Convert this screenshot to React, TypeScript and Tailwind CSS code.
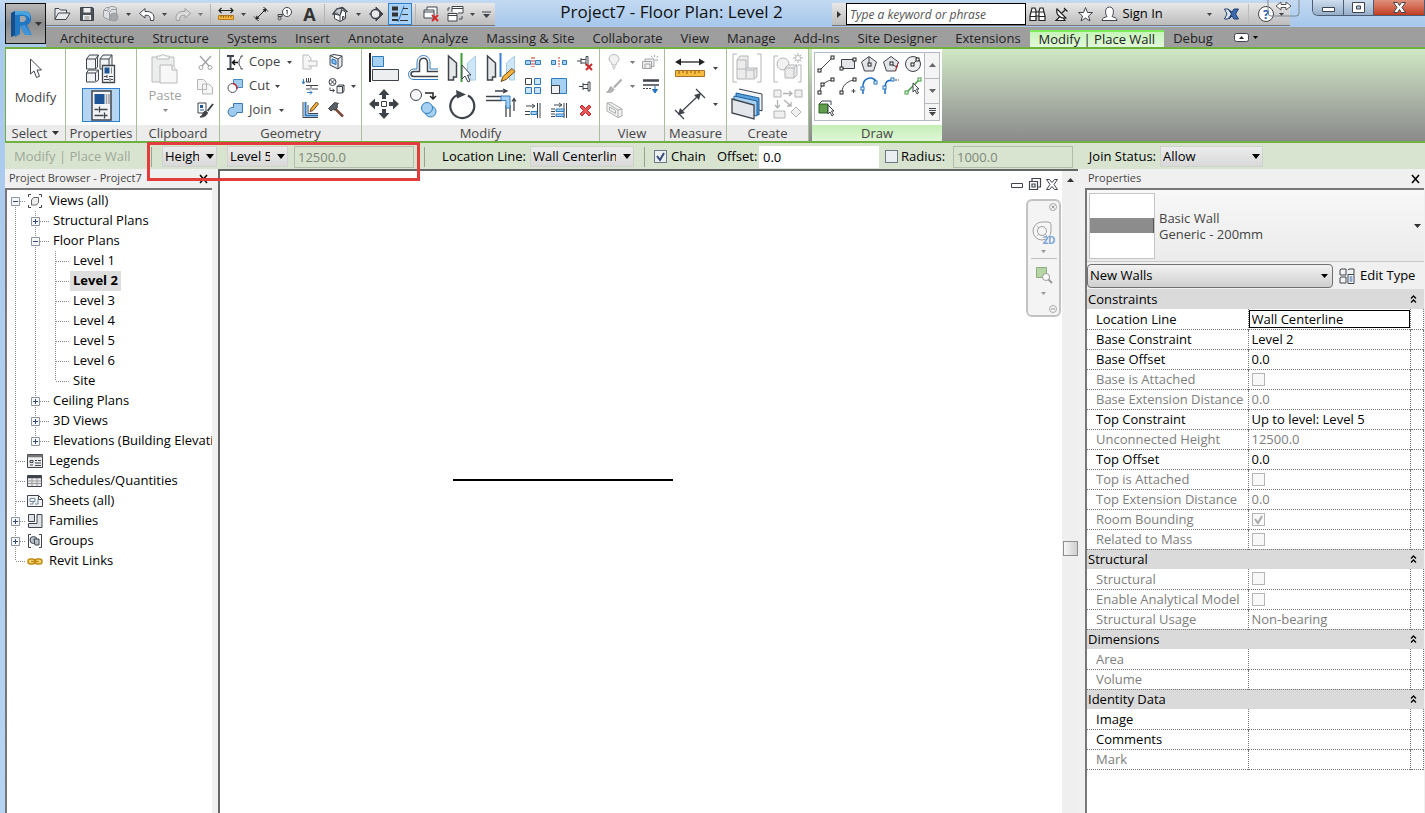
import { useState } from 'react'
import type { ReactNode } from 'react'

type IconProps = { w?: number; h?: number; box?: string; className?: string; children: ReactNode }

function Icon({ w = 16, h = w, box, className = '', children }: IconProps) {
  return (
    <svg
      width={w}
      height={h}
      viewBox={box || `0 0 ${w} ${h}`}
      fill="none"
      stroke="#3f444c"
      aria-hidden="true"
      className={`shrink-0 overflow-visible ${className}`}
    >
      {children}
    </svg>
  )
}

function Caret({ className = 'fill-[#444]' }: { className?: string }) {
  return (
    <svg width="5" height="3" viewBox="0 0 5 3" aria-hidden="true" className={`shrink-0 ${className}`}>
      <path d="M0 0h5L2.5 3z" />
    </svg>
  )
}

/* ---------- Quick access toolbar ---------- */

const OpenIcon = () => (
  <Icon w={17} h={14}>
    <path d="M1 12V1.500h4l1.500 1.500h6V6M1 12l3.500-6H16l-4 6.500H1z" fill="#e8eaec" strokeLinejoin="round" />
  </Icon>
)
const SaveIcon = () => (
  <Icon w={14}>
    <path d="M.5 .5h12l1 1v12H.5z" fill="#4a5058" />
    <path d="M3.500 1h7v4.500h-7z" fill="#eee" stroke="none" />
    <path d="M3 8h8v5H3z" fill="#eee" stroke="none" />
    <path d="M4.500 10h5M4.500 12h5" stroke="#888" />
  </Icon>
)
const SyncIcon = () => (
  <Icon w={17} h={16}>
    <g stroke="#999ca0">
      <path d="M1.500 4.500l3-3h3L8.500.500h3l3 1.500V11l-6 3.500-7-3.500z" fill="#dcdee0" strokeLinejoin="round" />
      <path d="M1.500 4.500h4l2 2v8M7.500 6.500l2-3h5M5.500 4.500l2-3" />
      <circle cx="12" cy="11" r="4" fill="#a5a7aa" />
    </g>
  </Icon>
)
const UndoIcon = () => (
  <Icon w={16} h={13}>
    <path d="M6 .5L.5 5.500 6 10V7.500c3-.8 5.500 0 5.500 5h3C16.500 6 12 3 6 3.500z" fill="#fff" strokeLinejoin="round" />
  </Icon>
)
const RedoIcon = () => (
  <Icon w={16} h={13}>
    <path d="M10 .5l5.500 5L10 10V7.500c-3-.8-5.500 0-5.500 5h-3C-.5 6 4 3 10 3.500z" fill="#ddd" stroke="#9a9da0" strokeLinejoin="round" />
  </Icon>
)
const RulerSmallIcon = () => (
  <Icon w={16} h={14}>
    <path d="M1 3.500h14M3.500 1L1 3.500 3.500 6M12.500 1L15 3.500 12.500 6" strokeWidth="1.200" stroke="#222" />
    <path d="M.5 8.500h15v4H.5z" fill="#f6b93b" stroke="#b9791c" />
    <path d="M3 8.500v2M5.500 8.500v2M8 8.500v2M10.500 8.500v2M13 8.500v2" stroke="#8a5a14" />
  </Icon>
)
const AlignedDimIcon = () => (
  <Icon w={16} h={16}>
    <path d="M3 13L13 3M1 10.500L5.500 15M10.500 1L15 5.500" stroke="#222" />
    <path d="M2.500 13.500l1-4 3 3zM13.500 2.500l-1 4-3-3z" fill="#222" stroke="none" />
  </Icon>
)
const TagIcon = () => (
  <Icon w={16} h={14}>
    <circle cx="10" cy="5" r="4.500" fill="#fff" />
    <path d="M9 4l1.200-1v4.500M1 7.500h4v2H1zM2.500 10a1.500 1.500 0 1 0 .1 0M5 8l1.500-1" />
  </Icon>
)
const HouseIcon = () => (
  <Icon w={16} h={15}>
    <path d="M2.500 7v4.500L8 14.500l5.500-3V5L10 3 8 8.500z" fill="#fff" strokeLinejoin="round" />
    <path d="M.5 7.500L5 2l5.500-1.500L15.500 5" strokeWidth="1.500" />
    <path d="M1 7.500L5 2l5-1-2 7.500L4.500 6z" fill="#c9ccd0" strokeLinejoin="round" />
    <path d="M8 8.500v6M10.500 13V9.500h1.500V12M10 1l5 4" />
  </Icon>
)
const SectionIcon = () => (
  <Icon w={15} h={14}>
    <path d="M7 0l7 7-7 7z" fill="#3f444c" />
    <circle cx="6.500" cy="7" r="4.500" fill="#e9eaeb" strokeWidth="1.500" />
    <path d="M0 7h2" />
  </Icon>
)
const ThinLinesIcon = () => (
  <Icon w={18} h={16}>
    <path d="M1 2.500h6M1 8.500h6" strokeWidth="4" stroke="#333" />
    <path d="M1 14h6" strokeWidth="2" stroke="#333" />
    <path d="M13 0L7 16" stroke="#1d6fc4" />
    <path d="M12 2.500h5M11 8.500h6M9 14.500h8" stroke="#333" />
  </Icon>
)
const CloseHiddenIcon = () => (
  <Icon w={17} h={16}>
    <path d="M4 4V1h10v7M1 4h10v8H1zM1 6h10" fill="#fff" />
    <path d="M9 9l6 6M15 9l-6 6" stroke="#d22a2a" strokeWidth="2" />
  </Icon>
)
const SwitchIcon = () => (
  <Icon w={17} h={16}>
    <path d="M5 6V.5h11V7h-5M1 7.500h9V15H1zM1 9.500h9M5 2.500h11" fill="#fff" />
    <path d="M1 5V2h2M15 10v3h-3" />
  </Icon>
)

/* ---------- Info center ---------- */

const BinocularsIcon = () => (
  <Icon w={17} h={15}>
    <path d="M3 1h3l1 3v9.500H1V9zM14 1h-3l-1 3v9.500h6V9zM7 5h3v4H7zM1.500 9.500h5M10.500 9.500h5M2.500 5h4M10.500 5h4" fill="#fff" strokeWidth="1.200" stroke="#222" />
  </Icon>
)
const DishIcon = () => (
  <Icon w={15}>
    <path d="M3 2c-1.500 5 3 10 9 9zM7.500 6.500l4-4M10 1l3.500 3.500M6 9.500l-4 4h9L9 11" fill="#fff" strokeWidth="1.200" stroke="#222" />
  </Icon>
)
const StarIcon = () => (
  <Icon w={15}>
    <path d="M7.500 .5l2 5h5L10.500 9l1.500 5-4.500-3L3 14l1.500-5L.5 5.500h5z" fill="#fff" />
  </Icon>
)
const PersonIcon = () => (
  <Icon w={17} h={16}>
    <path d="M1 14.500c0-3 3-3 5-4C4 8 3.500 1 8.500 1s4.500 7 2.500 9.500c2 1 5 1 5 4z" fill="#fff" />
  </Icon>
)
const ExchangeIcon = () => (
  <Icon w={15} h={12}>
    <path d="M4 1l4 3 2-3h4.500l-3 5 3 5H10L8 8l-3 3L8 6z" fill="#3c6cb0" stroke="#203f70" />
    <path d="M.5 1H4l3.500 5L4 11H.5L3 6z" fill="#dfe8f2" stroke="#203f70" />
  </Icon>
)

/* ---------- Ribbon icons ---------- */

const CursorIcon = () => (
  <Icon w={14} h={21}>
    <path d="M1.500 1v15l3.500-3 2.500 6.500 3-1.300L8 12h4.500z" fill="#fff" strokeLinejoin="round" />
  </Icon>
)
const TypePropsIcon = () => (
  <Icon w={30} h={30} box="1 0 30 30">
    <g fill="#f2f3f4" strokeLinejoin="round">
      <path d="M1.500 5l3-4h9l-1 3v9l-2 2h-9zM1.500 5h9v10M10.500 5l3-4M15 5l3-4h9v11l-3 3h-9zM15 5h9v10M24 5l3-4M1.500 19l2-3h10v10l-3 2h-9zM1.500 19h9v8M10.500 19l3-3" />
    </g>
    <path d="M17.500 11.500h12v17h-12z" fill="#f4f5f6" strokeWidth="1.300" />
    <path d="M19.500 13.500h5v6h-5z" fill="#1d5597" stroke="none" />
    <path d="M26.500 13.500v6" stroke="#888" />
    <path d="M19 22.500h3M24 22.500h4M19 25.500h5M26 25.500h2M22 21v3M25 24v3" />
  </Icon>
)
const PropsIcon = () => (
  <Icon w={21} h={29} box="1 1 20 29">
    <path d="M1.500 1h19v29h-19z" fill="#f2f3f4" strokeWidth="1.500" />
    <path d="M4 4h10v10H4z" fill="#1d5597" stroke="none" />
    <path d="M16 4v10M18.500 4v10" stroke="#9a9da1" strokeWidth="1.500" />
    <path d="M4 19.500h4M9 16.500v6M9 19.500h8M4 25.500h9M14 22.500v6M14 25.500h3" strokeWidth="1.300" />
  </Icon>
)
const PasteIcon = () => (
  <Icon w={28} h={32}>
    <g stroke="#b9babc" fill="#eceded">
      <path d="M1 4h22v25H1z" />
      <path d="M6 6V3h3q3-3 6 0h3v3z" fill="#fafafa" />
      <path d="M9 12h12l5 5v13H9z" fill="#f7f7f7" />
      <path d="M21 12v5h5" />
    </g>
  </Icon>
)
const ScissorsIcon = () => (
  <Icon w={15} h={15}>
    <path d="M2 1l9 10M13 1L4 11" stroke="#9fa1a4" strokeWidth="1.300" />
    <circle cx="3" cy="12.500" r="2" stroke="#9fa1a4" />
    <circle cx="12" cy="12.500" r="2" stroke="#9fa1a4" />
  </Icon>
)
const CopyClipIcon = () => (
  <Icon w={16} h={15}>
    <path d="M.5 .5h6l3 3v7h-9zM5.500 5h6l4 3v7h-10z" fill="#f5f5f5" stroke="#b4b6b8" />
  </Icon>
)
const MatchIcon = () => (
  <Icon w={17} h={16}>
    <path d="M1 1h8v10H1z" fill="#fff" />
    <path d="M3 3h3v3H3z" fill="#1d5597" stroke="none" />
    <path d="M3 8h4" stroke="#1d5597" />
    <path d="M16 2l-5.500 7" strokeWidth="2" />
    <path d="M3 15c3 .5 7-1 7.500-4.500L8 9c-2 1-2 5-5 6z" fill="#444" />
  </Icon>
)
const CopeIcon = () => (
  <Icon w={17} h={15}>
    <path d="M0 1h7M3.500 1v13M0 14h7" strokeWidth="2" />
    <path d="M5 7.500h6M8 5L5.500 7.500 8 10" stroke="#111" strokeWidth="1.500" />
    <path d="M16 1h-2c0 3-2 3-2 5v3c0 2 2 2 2 5h2" />
  </Icon>
)
const CutIcon = () => (
  <Icon w={17} h={16}>
    <path d="M6.500 1.500h9v8h-9z" fill="#9fcbee" stroke="#4589bf" />
    <circle cx="5.500" cy="10" r="4.500" fill="#fff" stroke="#555" />
    <path d="M5.500 5.500a4.500 4.500 0 0 1 4.300 5.500" stroke="#c22f3e" strokeWidth="1.500" />
  </Icon>
)
const JoinIcon = () => (
  <Icon w={17} h={16}>
    <path d="M6.500 5.500v-4h9v9h-5.500a4.500 4.500 0 1 1-3.500-5z" fill="#9fcbee" stroke="#3b77a8" />
  </Icon>
)
const CopingOffIcon = () => (
  <Icon w={16}>
    <path d="M1 1h5l3 3v3h6v5H9v3H1zM9 7H6M9 12H6" fill="#f5f5f5" stroke="#b9bbbd" />
  </Icon>
)
const WallOpenIcon = () => (
  <Icon w={14} h={16}>
    <path d="M1 1.500l8 3.500V15L1 11zM9 5l4-3v10l-4 3M1 1.500L5 .5l8 1.500" fill="#e6e9ec" strokeLinejoin="round" />
    <path d="M3 5l4 1.500v4L3 9z" fill="#8cc2ee" stroke="#1d6fc4" />
  </Icon>
)
const BeamJoinIcon = () => (
  <Icon w={17} h={16}>
    <path d="M1.500 1v5M0 3.500L1.500 6 3 3.500M5 14.500h5M8 12.500l2 2-2 2" stroke="#2e7bc0" />
    <path d="M4.500 0v4h4V0M6.500 0v4M4 7.500h12M4 11h4M10 11h6M9 7.500v4" />
  </Icon>
)
const SplitFaceIcon = () => (
  <Icon w={17} h={16}>
    <circle cx="4.500" cy="4" r="3.500" />
    <path d="M2.500 2l4 4M6.500 2l-4 4M2 9.500v3h4M4.500 11l2 1.500-2 1.500" />
    <path d="M9 8.500L10.500 7H16v6l-1.500 2H9zM9 8.500h5.500V15M14.500 8.500L16 7" fill="#eee" />
  </Icon>
)
const PaintEdgeIcon = () => (
  <Icon w={17} h={16}>
    <path d="M1 0v15.500h15M6 3v8.500h10" />
    <path d="M3.500 0v13.500H16" stroke="#2e7bc0" strokeWidth="2" />
    <path d="M8 9.500l1-3L14.500 0l2 2L11 8.500z" fill="#f4b23c" stroke="#6b4a1a" />
  </Icon>
)
const HammerIcon = () => (
  <Icon w={17} h={16}>
    <path d="M6.500 6l8.500 8.500" stroke="#7b4a3a" strokeWidth="2.500" />
    <path d="M.5 6.500l6-6 4 1-1.500 1.500.5 2.500-2.500 2.500-2-.5L3 9z" fill="#5b6067" strokeLinejoin="round" />
  </Icon>
)

const AlignIcon = () => (
  <Icon w={30} h={30}>
    <path d="M1 0v29" strokeWidth="2" stroke="#222" />
    <path d="M3.500 3.500h11v10h-11z" fill="#a6d1f2" stroke="#2e7bc0" />
    <path d="M3.500 16.500h26v11h-26z" fill="#eceeef" />
  </Icon>
)
const OffsetIcon = () => (
  <Icon w={30} h={26}>
    <path d="M30 24.500H6C-1.500 24.500-1 14 6 14h3V8C9-2 22-2 22 8v6h8" stroke="#2e7bc0" />
    <path d="M30 21.500H6c-4 0-4-5 0-5h5.500V8c0-6.500 8-6.500 8 0v8.500H30" strokeWidth="1.500" />
  </Icon>
)
const MirrorPickIcon = () => (
  <Icon w={28} h={30} box="1 0 28 30">
    <path d="M1.500 3l8 7v14h-3v3h-5z" fill="#e5e7e9" strokeWidth="1.500" />
    <path d="M28.500 3l-8 7v14h3v3h5z" fill="#cfe6f7" stroke="#a6cbe6" />
    <path d="M14.500 0v29" stroke="#3f9c3a" strokeWidth="2" />
    <path d="M15 12v14l3-3 3 6 2-1-2.500-6H24z" fill="#fff" />
  </Icon>
)
const MirrorDrawIcon = () => (
  <Icon w={28} h={30} box="1 0 28 30">
    <path d="M1.500 3l8 7v14h-3v3h-5z" fill="#e5e7e9" strokeWidth="1.500" />
    <path d="M28.500 3l-8 7v14h3v3h5z" fill="#cfe6f7" stroke="#a6cbe6" />
    <path d="M14.500 0v24" stroke="#3a7fd0" strokeWidth="2" />
    <path d="M15 28.500l2-5 9-8 3 3-9 8z" fill="#f4b23c" stroke="#6b4a1a" />
  </Icon>
)
const MoveIcon = () => (
  <Icon w={30} h={30}>
    <path
      d="M15 0l5.500 6H17v4h-4V6H9.500zM15 30l5.500-6H17v-4h-4v4H9.500zM0 15l6-5.500V13h4v4H6v3.500zM30 15l-6-5.500V13h-4v4h4v3.500z"
      fill="#3f444c"
      stroke="none"
    />
    <path d="M12.500 12.500h5v5h-5z" />
  </Icon>
)
const CopyIcon = () => (
  <Icon w={28} h={30} box="0 1 28 30">
    <circle cx="7" cy="7" r="5.500" fill="#f6f6f6" />
    <path d="M16 5h8v6M21 8l3 3 3-3" strokeWidth="1.500" stroke="#222" />
    <circle cx="21.500" cy="23.500" r="5.500" fill="#a6d1f2" stroke="#2e7bc0" />
    <circle cx="18" cy="20" r="5.500" fill="#a6d1f2" stroke="#2e7bc0" />
  </Icon>
)
const RotateIcon = () => (
  <Icon w={28} h={30}>
    <path d="M20 6.500a12 12 0 1 1-9-1" strokeWidth="2.200" />
    <path d="M8 1l10 4.500L9 9.500z" fill="#3f444c" stroke="none" />
  </Icon>
)
const TrimIcon = () => (
  <Icon w={30} h={30}>
    <path d="M0 7.500h16M0 11.500h16M20 28V16M24 28V16M9 2h11M17 0l4 2-4 2M28 22V10M26 12.500l2-3 2 3" strokeWidth="1.300" />
    <path d="M15 7h9v12h-4v-7.500h-5z" fill="#a6d1f2" stroke="#2e7bc0" />
  </Icon>
)
const SplitIcon = () => (
  <Icon w={16} h={10}>
    <path d="M.5 3.500h5v4h-5zM10.500 3.500h5v4h-5z" fill="#a6d1f2" stroke="#2e7bc0" />
    <path d="M7 0v10M9 0v10" stroke="#c5342f" strokeDasharray="2 1" />
  </Icon>
)
const SplitGapIcon = () => (
  <Icon w={16} h={10}>
    <path d="M.5 3.500h4v4h-4zM11.500 3.500h4v4h-4z" fill="#a6d1f2" stroke="#2e7bc0" />
    <path d="M8 0v10" stroke="#c5342f" strokeDasharray="2 1" />
  </Icon>
)
const UnpinIcon = () => (
  <Icon w={16} h={15}>
    <path d="M0 6h4M4 3v6M4 4.500h5M4 8h5M9 1.500v9h2v-9z" />
    <path d="M9 9l6 6M15 9l-6 6" stroke="#cc2b2b" strokeWidth="2" />
  </Icon>
)
const PinIcon = () => (
  <Icon w={14} h={11}>
    <path d="M1 5.500h4M5 2v7M5 3.500h5M5 7.500h5M10 1v9h2V1z" />
  </Icon>
)
const ArrayIcon = () => (
  <Icon w={16}>
    <path d="M.5 .5h6v6h-6z" />
    <path d="M9.500 .5h6v6h-6zM.5 9.500h6v6h-6zM9.500 9.500h6v6h-6z" fill="#cde5f8" stroke="#2e7bc0" />
  </Icon>
)
const ScaleIcon = () => (
  <Icon w={16}>
    <path d="M.5 .5h15v15H.5z" fill="#a6d1f2" stroke="#2e7bc0" />
    <path d="M.5 7.500h8v8h-8z" fill="#f0f1f2" />
  </Icon>
)
const TrimOneIcon = () => (
  <Icon w={16}>
    <path d="M1 4h8M7 2l3 2-3 2M0 9.500h5M0 12.500h5M12.500 1v15M15 1v15" />
    <path d="M6 9.500h6v3H6z" fill="#a6d1f2" stroke="#2e7bc0" />
  </Icon>
)
const TrimManyIcon = () => (
  <Icon w={16}>
    <path d="M3 3h7M8 1l3 2-3 2M0 7h4M0 9.500h4M0 12h4M0 14.500h4M13 1v15M15.500 1v15" />
    <path d="M5 7h8v2.500H5zM5 12h8v2.500H5z" fill="#a6d1f2" stroke="#2e7bc0" />
  </Icon>
)
const DeleteIcon = () => (
  <Icon w={13}>
    <path d="M1 3l2-2 3.500 3.500L10 1l2 2-3.500 3.500L12 10l-2 2-3.500-3.500L3 12l-2-2 3.500-3.500z" fill="#f0555a" stroke="#b3262a" />
  </Icon>
)

const BulbIcon = () => (
  <Icon w={12} h={16}>
    <path d="M4 11C4 8 1 8 1 5a5 4.500 0 0 1 10 0c0 3-3 3-3 6zM4 13h4M5 15h2" fill="#f2f2f2" stroke="#b5b7b9" />
  </Icon>
)
const DisplaceIcon = () => (
  <Icon w={16} h={15}>
    <g stroke="#a2a4a6">
      <path d="M.5 6.500h9v7h-9zM3 6.500V4h9v7.500H9.500M3 9h5v4.500H3z" fill="#f0f0f0" />
      <path d="M12.500 0v2M9 1l1.500 1.500M16 1l-1.500 1.500M13 5h3" />
    </g>
  </Icon>
)
const BrushIcon = () => (
  <Icon w={16} h={15}>
    <path d="M15.500 .5L8 8.500" stroke="#a9abad" strokeWidth="2" />
    <path d="M.5 13c3 0 2-4 4.500-5.500l3 3C7 13 4 14 .5 13z" fill="#b5b5b5" stroke="#a9abad" />
  </Icon>
)
const LineworkIcon = () => (
  <Icon w={17} h={15}>
    <path d="M1 1.500h16" strokeWidth="2.500" />
    <path d="M1 6h16" strokeWidth="1.500" />
    <path d="M1 9.500h9" strokeDasharray="2 1" />
    <path d="M13 7v5M10.500 10.500L13 14l2.500-3.500z" fill="#2e7bc0" stroke="#1d6fc4" />
  </Icon>
)
const ViewBeamIcon = () => (
  <Icon w={17} h={16}>
    <path d="M1 1l4-.5 11 6.500v7l-4 1.500L1 9zM1 1l11 7v7.500M12 8l4-1M3.500 5l6 3.500v3l-6-3.500z" fill="#f2f2f2" stroke="#abadaf" />
  </Icon>
)
const MeasureIcon = () => (
  <Icon w={30} h={20}>
    <path d="M2 4h26" strokeWidth="1.300" stroke="#222" />
    <path d="M0 4l6-3.500v7zM30 4l-6-3.500v7z" fill="#222" stroke="none" />
    <path d="M.5 12.500h29v6H.5z" fill="#f6bd3f" stroke="#a8702a" />
    <path d="M4 13v3M8 13v2M12 13v3M16 13v2M20 13v3M24 13v2" stroke="#8a5a14" />
  </Icon>
)
const DimensionIcon = () => (
  <Icon w={30} h={30}>
    <path d="M4 25L25 5M0 21l9 9M21 0l9 9" strokeWidth="1.300" />
    <path d="M3 26l2-7 5 5zM26 4l-2 7-5-5z" fill="#3f444c" stroke="none" />
  </Icon>
)
const AssemblyIcon = () => (
  <Icon w={30} h={30}>
    <g stroke="#b3b5b7">
      <path d="M5 1H1v28h4M25 1h4v28h-4" />
      <path d="M5 7l3-4h8v12h9v8l-2 3H5zM5 7h9v18M5 16h9l2-2M14 17h8v8M22 17l3-2" fill="#ececec" />
    </g>
  </Icon>
)
const SimilarIcon = () => (
  <Icon w={30} h={30}>
    <g stroke="#b3b5b7">
      <path d="M5 3H1v26h4M25 12h3v17h-3" />
      <circle cx="10" cy="11" r="6" fill="#f2f2f2" />
      <path d="M12 15l3-3h9v10l-3 3h-9zM12 15h9v10M21 15l3-3" fill="#ececec" />
      <circle cx="25" cy="5" r="2.500" />
      <path d="M25 0v2M25 8v2M20 5h2M28 5h2M21.500 1.500l1.500 1.500M27 7l1.500 1.500M28.500 1.500L27 3M23 7l-1.500 1.500" />
    </g>
  </Icon>
)
const GroupIcon = () => (
  <Icon w={32} h={32}>
    <path d="M8 1l23 5v17l-3-1" fill="#f2f3f5" />
    <path d="M5 5l23 5v17L5 20z" fill="#57a2dc" stroke="#1c5f9e" />
    <path d="M3 8l23 5v15L3 23z" fill="#a9d2f2" stroke="#1c5f9e" />
    <path d="M1 11l22 6v14L1 25z" fill="#e3e6ea" strokeWidth="1.300" />
  </Icon>
)
const PartsIcon = () => (
  <Icon w={30} h={30}>
    <g stroke="#b1b3b5">
      <path d="M1 1h7v7H1zM22 1h7v7h-7zM1 22h11v7H1zM23 18l5 5-5 5-5-5z" fill="#f0f0f0" />
      <path d="M10 4.500h9M16 2l3 2.500L16 7M4.500 11v8M2 16l2.500 3L7 16M11 11l7 6M14 17h4v-4" strokeWidth="1.300" />
    </g>
  </Icon>
)

/* ---------- Draw gallery ---------- */

const Node = ({ x, y, c = '#222' }: { x: number; y: number; c?: string }) => (
  <rect x={x - 1} y={y - 1} width="3" height="3" fill="#fff" stroke={c} />
)

const drawTools: { name: string; icon: ReactNode }[] = [
  { name: 'Line', icon: <><path d="M1 15L15 1" /><Node x={1} y={14} /><Node x={14} y={1} /></> },
  { name: 'Rectangle', icon: <><path d="M1.500 3.500h13v9h-13z" fill="#e3e5e8" /><Node x={1} y={12} /><Node x={14} y={3} /></> },
  { name: 'Inscribed polygon', icon: <><path d="M8 .5l7.500 5.500-3 9h-9L.5 6z" fill="#e3e5e8" /><path d="M8 1v7" /><Node x={8} y={8} /></> },
  { name: 'Circumscribed polygon', icon: <><path d="M8 .5l7.500 5.500-3 9h-9L.5 6z" fill="#e3e5e8" /><path d="M8 8l5 2.500" /><path d="M13 10l2 1M13.500 10.500L12.500 15M13.500 10.500l2-4" stroke="#c22" strokeDasharray="2 1" /><Node x={8} y={7} /></> },
  { name: 'Circle', icon: <><circle cx="8" cy="8" r="7.500" fill="#eceef0" /><path d="M8 8l5-5" /><Node x={7} y={8} /><Node x={12} y={3} /></> },
  { name: 'Start-end-radius arc', icon: <><path d="M2 14C2 8 7 3 14 2" /><Node x={1} y={14} /><Node x={4} y={6} /><Node x={14} y={1} /></> },
  { name: 'Center-ends arc', icon: <><path d="M2 14C2 8 7 3 14 2M13.500 11v4M11.500 13h4" /><Node x={1} y={14} /><Node x={14} y={1} /></> },
  { name: 'Tangent end arc', icon: <><path d="M2 16v-6C1-2 14-2 15 4" stroke="#1d6fc4" strokeWidth="1.500" /><Node x={1} y={10} c="#1d6fc4" /><Node x={14} y={4} c="#1d6fc4" /></> },
  { name: 'Fillet arc', icon: <><path d="M2 16v-6C2 4 4 2 10 2" stroke="#1d6fc4" strokeWidth="1.500" /><path d="M12 2h4" strokeDasharray="2 1" /><Node x={1} y={9} c="#1d6fc4" /><Node x={9} y={1} c="#1d6fc4" /></> },
  { name: 'Pick lines', icon: <><path d="M1 15L15 1" stroke="#3f9c3a" strokeWidth="1.500" /><Node x={1} y={14} c="#3f9c3a" /><Node x={14} y={1} c="#3f9c3a" /><path d="M8 5v9l2-2 2 4 1.500-1-2-4H14z" fill="#fff" /></> },
  { name: 'Pick faces', icon: <><path d="M1 4l3-3h9v4" fill="#fff" /><path d="M1 4h9v9H1z" fill="#5f9e4b" stroke="#2f5f25" /><path d="M10 5v9l2-2 2 4 1.500-1-2-4H16z" fill="#fff" /></> },
]

/* ---------- Small building blocks ---------- */

function ToolButton({ label, className = '', children }: { label: string; className?: string; children: ReactNode }) {
  return (
    <button type="button" aria-label={label} className={`flex items-center justify-center ${className}`}>
      {children}
    </button>
  )
}

function Panel({ title, className = '', children }: { title: ReactNode; className?: string; children: ReactNode }) {
  return (
    <section className={`flex shrink-0 flex-col border-r border-[#a9bf9c] bg-white ${className}`}>
      <div className="flex h-[76px] items-start pt-px">{children}</div>
      <h2 className="flex flex-1 items-center justify-center gap-[5px] bg-[#ececec] text-[13px] leading-4 text-[#444]">{title}</h2>
    </section>
  )
}

const Divider = () => <span className="mx-[3px] h-5 w-px bg-[#b5b5b5]" />

function Check({ id, label, checked = false, disabled = false }: { id: string; label?: string; checked?: boolean; disabled?: boolean }) {
  const [on, setOn] = useState(checked)
  return (
    <span className="relative inline-flex size-[13px] shrink-0">
      <input
        id={id}
        type="checkbox"
        aria-label={label}
        checked={on}
        disabled={disabled}
        onChange={() => setOn(!on)}
        className={`size-[13px] appearance-none border ${disabled ? 'border-[#b5b5b5] bg-[#f8f8f8]' : 'border-[#707a86] bg-[#eceff2]'}`}
      />
      {on && (
        <svg viewBox="0 0 13 13" aria-hidden="true" className="pointer-events-none absolute inset-0 fill-none">
          <path d="M3 6l3 4 4-7" strokeWidth="2" stroke={disabled ? '#a8a8a8' : '#33497a'} />
        </svg>
      )}
    </span>
  )
}

function Dropdown({ id, label, options, className = '' }: { id: string; label?: string; options: string[]; className?: string }) {
  return (
    <span className={`relative flex items-center ${className}`}>
      <select
        id={id}
        aria-label={label}
        className="h-[21px] w-full appearance-none border border-[#d0d3cd] bg-linear-to-b from-[#ececec] to-[#d9d9d9] pr-[17px] pl-[2px] text-[13px] text-black"
      >
        {options.map((o) => (
          <option key={o}>{o}</option>
        ))}
      </select>
      <svg width="8" height="5" viewBox="0 0 8 5" aria-hidden="true" className="pointer-events-none absolute right-[3px]">
        <path d="M0 0h8L4 5z" />
      </svg>
    </span>
  )
}

/* ---------- Title bar ---------- */

function QuickAccess() {
  return (
    <div className="flex h-[23px] w-[449px] shrink-0 items-center border-b border-[#777] bg-linear-to-b from-[#e8e8e8] to-[#bcbcbc] pl-[5px]">
      <ToolButton label="Open" className="w-6"><OpenIcon /></ToolButton>
      <ToolButton label="Save" className="w-6"><SaveIcon /></ToolButton>
      <ToolButton label="Synchronize" className="w-6"><SyncIcon /></ToolButton>
      <ToolButton label="Synchronize options" className="w-3"><Caret /></ToolButton>
      <ToolButton label="Undo" className="w-6"><UndoIcon /></ToolButton>
      <ToolButton label="Undo history" className="w-3"><Caret /></ToolButton>
      <ToolButton label="Redo" className="w-6"><RedoIcon /></ToolButton>
      <ToolButton label="Redo history" className="w-3"><Caret className="fill-[#777]" /></ToolButton>
      <Divider />
      <ToolButton label="Measure" className="w-6"><RulerSmallIcon /></ToolButton>
      <ToolButton label="Measure options" className="w-3"><Caret /></ToolButton>
      <ToolButton label="Aligned dimension" className="w-6"><AlignedDimIcon /></ToolButton>
      <ToolButton label="Tag by category" className="w-6"><TagIcon /></ToolButton>
      <ToolButton label="Text" className="w-6 text-[18px] leading-5 font-bold text-[#333]">A</ToolButton>
      <Divider />
      <ToolButton label="Default 3D view" className="w-6"><HouseIcon /></ToolButton>
      <ToolButton label="3D view options" className="w-3"><Caret /></ToolButton>
      <ToolButton label="Section" className="w-6"><SectionIcon /></ToolButton>
      <ToolButton label="Thin lines" className="h-[22px] w-6 border border-[#2f7fd0] bg-[#a9d0f5]"><ThinLinesIcon /></ToolButton>
      <Divider />
      <ToolButton label="Close hidden windows" className="w-6"><CloseHiddenIcon /></ToolButton>
      <ToolButton label="Switch windows" className="w-6"><SwitchIcon /></ToolButton>
      <ToolButton label="Switch windows options" className="w-3"><Caret /></ToolButton>
      <ToolButton label="Customize toolbar" className="w-4">
        <Icon w={9} h={7}><path d="M0 1h9" /><path d="M1 3h7L4.500 7z" fill="#3f444c" stroke="none" /></Icon>
      </ToolButton>
    </div>
  )
}

function InfoCenter() {
  return (
    <div className="relative flex h-[23px] w-[458px] shrink-0 items-center border-b border-[#777] bg-linear-to-b from-[#e8e8e8] to-[#bcbcbc]">
      <ToolButton label="Toggle search" className="h-full w-[14px]">
        <Icon w={4} h={7}><path d="M0 0l4 3.500L0 7z" fill="#333" stroke="none" /></Icon>
      </ToolButton>
      <input
        type="text"
        aria-label="Search"
        placeholder="Type a keyword or phrase"
        className="h-[22px] w-[180px] border border-black bg-white px-[3px] text-xs italic placeholder:text-[#555]"
      />
      <ToolButton label="Find" className="w-6"><BinocularsIcon /></ToolButton>
      <ToolButton label="Subscription center" className="w-6"><DishIcon /></ToolButton>
      <ToolButton label="Favorites" className="w-6"><StarIcon /></ToolButton>
      <button type="button" className="flex w-[102px] items-center gap-[4px] pl-[4px] text-[13px]"><PersonIcon />Sign In</button>
      <ToolButton label="Sign in options" className="w-5"><Caret /></ToolButton>
      <ToolButton label="Exchange apps" className="w-6"><ExchangeIcon /></ToolButton>
      <span className="mx-[5px] h-5 w-px bg-[#bbb]" />
      <ToolButton label="Help" className="ml-[4px] size-[16px] rounded-full border border-[#444] bg-white text-[13px] leading-none font-bold text-[#1f5fa8]">?</ToolButton>
      <ToolButton label="Help options" className="w-4"><Caret /></ToolButton>
      <svg width="33" height="20" viewBox="0 0 33 20" aria-hidden="true" className="absolute -top-[3px] right-[-10px] fill-none">
        <path d="M1 0v13q0 3 3 3h25q3 0 3-3V0" stroke="#7d8792" />
        <path d="M9 6l5-4v2.500h5V2l5 4-5 4V7.500h-5V10z" fill="#fff" stroke="#555" />
      </svg>
    </div>
  )
}

function WindowButtons() {
  return (
    <div className="ml-[22px] flex h-4 w-[113px] shrink-0 overflow-hidden rounded-bl-md border border-t-0 border-[#4a5d72]">
      <button type="button" aria-label="Minimize" className="flex w-[31px] items-center justify-center border-r border-[#4a5d72] bg-linear-to-b from-[#cfdeee] to-[#96aec9]">
        <Icon w={13} h={5} className="mt-[4px]"><path d="M.5 .5h12v4H.5z" fill="#fff" /></Icon>
      </button>
      <button type="button" aria-label="Restore" className="flex w-[30px] items-center justify-center border-r border-[#4a5d72] bg-linear-to-b from-[#cfdeee] to-[#96aec9]">
        <Icon w={13} h={11}><path d="M.5 .5h12v10H.5zM4.500 4h4v3h-4z" fill="#fff" fillRule="evenodd" /></Icon>
      </button>
      <button type="button" aria-label="Close" className="flex flex-1 items-center justify-center bg-linear-to-b from-[#e0907a] to-[#c23a22]">
        <Icon w={13} h={11}><path d="M.5 .5h4l2 3 2-3h4l-3.500 5 3.500 5h-4l-2-3-2 3h-4L4 5.500z" fill="#fff" /></Icon>
      </button>
    </div>
  )
}

const tabs = [
  'Architecture', 'Structure', 'Systems', 'Insert', 'Annotate', 'Analyze', 'Massing & Site', 'Collaborate',
  'View', 'Manage', 'Add-Ins', 'Site Designer', 'Extensions', 'Modify | Place Wall', 'Debug',
]

function Header() {
  return (
    <header className="flex pl-[5px]">
      <button
        type="button"
        aria-label="Application menu"
        className="z-10 mt-[3px] -mb-[3px] flex h-[41px] w-[41px] shrink-0 items-center justify-center gap-[2px] border border-[#111] bg-linear-to-b from-[#b9b9b9] via-[#8b8b8b] to-[#a8a8a8]"
      >
        <svg width="23" height="28" viewBox="0 0 23 28" aria-hidden="true">
          <path d="M1 3l4-2 1 24-5 2z" fill="#144f8c" />
          <path d="M5 1h9c9 0 9 12 3 14l5 10h-7l-5-9v8l-5 3z" fill="#2277c2" />
          <path d="M10 6h3c4 0 4 5 0 6h-3z" fill="#a5a8ac" />
          <path d="M5 1h9c5 0 7 4 6 8-3-5-8-5-15-4z" fill="#4ba3e0" />
          <path d="M10 16l5-1 7 10h-7z" fill="#3f93d6" />
        </svg>
        <svg width="7" height="4" viewBox="0 0 7 4" aria-hidden="true" className="fill-[#333]"><path d="M0 0h7L3.500 4z" /></svg>
      </button>
      <div className="min-w-0 flex-1">
        <div className="flex h-[27px] items-start">
          <div className="pt-[3px]"><QuickAccess /></div>
          <h1 className="min-w-0 flex-1 truncate pl-4 text-center text-[17px] leading-6 text-[#111]">Project7 - Floor Plan: Level 2</h1>
          <div className="pt-[3px]"><InfoCenter /></div>
          <WindowButtons />
        </div>
        <nav className="flex h-5 items-stretch bg-[#9e9e9e] pl-[5px] text-[13px] text-[#222]">
          {tabs.map((t) => (
            <button
              key={t}
              type="button"
              className={
                t.startsWith('Modify')
                  ? 'mt-[3px] border-t-2 border-[#7dea5e] bg-linear-to-b from-[#c8f5ba] to-[#e0f8d8] px-[9px] leading-[15px] whitespace-nowrap'
                  : 'px-[9px] pt-[3px] leading-[17px] whitespace-nowrap'
              }
            >
              {t}
            </button>
          ))}
          <ToolButton label="Minimize ribbon" className="ml-3 gap-1">
            <Icon w={15} h={9}><rect x=".5" y=".5" width="14" height="8" rx="2" fill="#fff" /><path d="M5 6l2.500-3L10 6z" fill="#222" stroke="none" /></Icon>
            <Caret className="fill-black" />
          </ToolButton>
        </nav>
      </div>
    </header>
  )
}

/* ---------- Ribbon ---------- */

function SmallTool({ label, icon, width }: { label: string; icon: ReactNode; width: string }) {
  return (
    <button type="button" className={`flex h-6 items-center gap-[5px] text-[13px] text-[#444] ${width}`}>
      {icon}
      <span className="flex-1 text-left">{label}</span>
      <Caret />
    </button>
  )
}

function Ribbon() {
  return (
    <div className="ml-[5px] flex h-[96px] border-y-2 border-l border-[#6fb040] bg-linear-to-b from-[#cfe8c3] via-[#aeb8a9] to-[#8a8a8a]">
      <Panel className="w-[60px]" title={<>Select <svg width="7" height="4" viewBox="0 0 7 4" aria-hidden="true" className="fill-[#333]"><path d="M0 0h7L3.500 4z" /></svg></>}>
        <button type="button" className="flex w-full flex-col items-center gap-[8px] pt-[8px] text-[13px] leading-5 text-[#444]">
          <CursorIcon />
          Modify
        </button>
      </Panel>

      <Panel className="w-[71px]" title="Properties">
        <div className="flex w-full flex-col items-center gap-[2px] pt-[2px]">
          <ToolButton label="Type properties" className="h-[34px] w-[38px]"><TypePropsIcon /></ToolButton>
          <ToolButton label="Properties palette" className="h-[34px] w-[38px] border border-[#2f7fd0] bg-[#b5d5f2]"><PropsIcon /></ToolButton>
        </div>
      </Panel>

      <Panel className="w-[83px]" title="Clipboard">
        <button type="button" className="flex w-14 flex-col items-center pt-[3px] text-[13px] leading-5 text-[#a0a0a0]">
          <PasteIcon />
          Paste
          <Caret className="mt-[4px] fill-[#888]" />
        </button>
        <div className="flex w-6 flex-col">
          <ToolButton label="Cut to clipboard" className="h-6"><ScissorsIcon /></ToolButton>
          <ToolButton label="Copy to clipboard" className="h-6"><CopyClipIcon /></ToolButton>
          <ToolButton label="Match type" className="h-6"><MatchIcon /></ToolButton>
        </div>
      </Panel>

      <Panel className="w-[142px]" title="Geometry">
        <div className="flex w-[77px] flex-col pl-[7px]">
          <SmallTool label="Cope" icon={<CopeIcon />} width="w-[65px]" />
          <SmallTool label="Cut" icon={<CutIcon />} width="w-[53px]" />
          <SmallTool label="Join" icon={<JoinIcon />} width="w-[57px]" />
        </div>
        <div className="grid grid-cols-[26px_26px_8px]">
          <ToolButton label="Cut geometry options" className="h-6"><CopingOffIcon /></ToolButton>
          <ToolButton label="Wall opening" className="h-6"><WallOpenIcon /></ToolButton>
          <span />
          <ToolButton label="Beam joins" className="h-6"><BeamJoinIcon /></ToolButton>
          <ToolButton label="Split face" className="h-6"><SplitFaceIcon /></ToolButton>
          <ToolButton label="Split face options" className="h-6"><Caret /></ToolButton>
          <ToolButton label="Wall joins" className="h-6"><PaintEdgeIcon /></ToolButton>
          <ToolButton label="Demolish" className="h-6"><HammerIcon /></ToolButton>
        </div>
      </Panel>

      <Panel className="w-[238px]" title="Modify">
        <div className="grid grid-cols-[39px_39px_39px_39px] pl-[2px]">
          <ToolButton label="Align" className="h-9"><AlignIcon /></ToolButton>
          <ToolButton label="Offset" className="h-9"><OffsetIcon /></ToolButton>
          <ToolButton label="Mirror pick axis" className="h-9"><MirrorPickIcon /></ToolButton>
          <ToolButton label="Mirror draw axis" className="h-9"><MirrorDrawIcon /></ToolButton>
          <ToolButton label="Move" className="h-9"><MoveIcon /></ToolButton>
          <ToolButton label="Copy" className="h-9"><CopyIcon /></ToolButton>
          <ToolButton label="Rotate" className="h-9"><RotateIcon /></ToolButton>
          <ToolButton label="Trim to corner" className="h-9"><TrimIcon /></ToolButton>
        </div>
        <div className="grid grid-cols-[26px_26px_26px]">
          <ToolButton label="Split element" className="h-6"><SplitIcon /></ToolButton>
          <ToolButton label="Split with gap" className="h-6"><SplitGapIcon /></ToolButton>
          <ToolButton label="Unpin" className="h-6"><UnpinIcon /></ToolButton>
          <ToolButton label="Array" className="h-6"><ArrayIcon /></ToolButton>
          <ToolButton label="Scale" className="h-6"><ScaleIcon /></ToolButton>
          <ToolButton label="Pin" className="h-6"><PinIcon /></ToolButton>
          <ToolButton label="Trim single" className="h-6"><TrimOneIcon /></ToolButton>
          <ToolButton label="Trim multiple" className="h-6"><TrimManyIcon /></ToolButton>
          <ToolButton label="Delete" className="h-6"><DeleteIcon /></ToolButton>
        </div>
      </Panel>

      <Panel className="w-[65px]" title="View">
        <div className="grid grid-cols-[26px_10px_26px] pl-px">
          <ToolButton label="Hide in view" className="h-6"><BulbIcon /></ToolButton>
          <ToolButton label="Hide options" className="h-6"><Caret className="fill-[#777]" /></ToolButton>
          <ToolButton label="Displace" className="h-6"><DisplaceIcon /></ToolButton>
          <ToolButton label="Override graphics" className="h-6"><BrushIcon /></ToolButton>
          <ToolButton label="Override options" className="h-6"><Caret className="fill-[#777]" /></ToolButton>
          <ToolButton label="Linework" className="h-6"><LineworkIcon /></ToolButton>
          <ToolButton label="Selection box" className="h-6"><ViewBeamIcon /></ToolButton>
        </div>
      </Panel>

      <Panel className="w-[62px]" title="Measure">
        <div className="grid grid-cols-[40px_10px] pl-[5px]">
          <ToolButton label="Measure distance" className="h-9"><MeasureIcon /></ToolButton>
          <ToolButton label="Measure distance options" className="h-9"><Caret /></ToolButton>
          <ToolButton label="Dimension" className="h-9"><DimensionIcon /></ToolButton>
          <ToolButton label="Dimension options" className="h-9"><Caret /></ToolButton>
        </div>
      </Panel>

      <Panel className="w-[82px]" title="Create">
        <div className="grid w-full grid-cols-2">
          <ToolButton label="Create assembly" className="h-9"><AssemblyIcon /></ToolButton>
          <ToolButton label="Create similar" className="h-9"><SimilarIcon /></ToolButton>
          <ToolButton label="Create group" className="h-9"><GroupIcon /></ToolButton>
          <ToolButton label="Create parts" className="h-9"><PartsIcon /></ToolButton>
        </div>
      </Panel>

      <section className="ml-[3px] flex w-[130px] shrink-0 flex-col bg-white">
        <div className="h-[76px] px-[2px] pt-[3px]">
          <div className="flex h-[69px] border border-[#b5b9bd]">
            <div className="grid flex-1 grid-cols-5 content-start">
              {drawTools.map((t) => (
                <ToolButton key={t.name} label={t.name} className="h-[22px]">
                  <Icon>{t.icon}</Icon>
                </ToolButton>
              ))}
            </div>
            <div className="flex w-[15px] flex-col divide-y divide-[#b5b9bd] border-l border-[#b5b9bd] bg-[#f4f4f4]">
              <ToolButton label="Scroll up" className="flex-1"><Icon w={7} h={4}><path d="M0 4h7L3.500 0z" fill="#666" stroke="none" /></Icon></ToolButton>
              <ToolButton label="Scroll down" className="flex-1"><Icon w={7} h={4}><path d="M0 0h7L3.500 4z" fill="#666" stroke="none" /></Icon></ToolButton>
              <ToolButton label="More" className="h-4"><Icon w={7} h={8}><path d="M0 .5h7M0 2.500h7" /><path d="M0 4h7L3.500 8z" fill="#444" stroke="none" /></Icon></ToolButton>
            </div>
          </div>
        </div>
        <h2 className="flex flex-1 items-center justify-center bg-linear-to-b from-[#c3efb4] to-[#e0f6d8] text-[13px] leading-4 text-[#444]">Draw</h2>
      </section>
    </div>
  )
}

/* ---------- Options bar ---------- */

const fieldClass = 'h-[22px] w-[120px] border px-[3px] text-[13px]'

function OptionsBar() {
  return (
    <div className="relative ml-[5px] flex h-[26px] shrink-0 items-center bg-[#d8e4d0] pt-px text-[13px] whitespace-nowrap">
      <span className="w-[146px] pl-[9px] text-[#9fa89a]">Modify | Place Wall</span>
      <span className="mr-[10px] h-5 w-px bg-[#9aa392]" />
      <Dropdown id="height" label="Height or depth" options={['Height:', 'Depth:']} className="mr-[10px] w-[55px]" />
      <Dropdown id="top-level" label="Top level" options={['Level 5', 'Level 6', 'Unconnected']} className="mr-[6px] w-[61px]" />
      <input type="text" aria-label="Unconnected height" disabled defaultValue="12500.0" className={`${fieldClass} border-[#b4bdac] text-[#7e877a]`} />
      <span className="mx-[10px] h-5 w-px bg-[#9aa392]" />
      <label htmlFor="location" className="w-[95px] pr-[4px] text-right">Location Line:</label>
      <Dropdown id="location" options={['Wall Centerline', 'Core Centerline']} className="w-[104px]" />
      <span className="mr-[9px] ml-[10px] h-5 w-px bg-[#9aa392]" />
      <Check id="chain" checked />
      <label htmlFor="chain" className="w-[50px] pl-[4px]">Chain</label>
      <label htmlFor="offset" className="w-[42px]">Offset:</label>
      <input id="offset" type="text" defaultValue="0.0" className={`${fieldClass} border-white bg-white`} />
      <span className="w-[6px]" />
      <Check id="radius-on" />
      <label htmlFor="radius-on" className="w-[55px] pl-[3px]">Radius:</label>
      <input type="text" aria-label="Radius value" disabled defaultValue="1000.0" className={`${fieldClass} border-[#b4bdac] text-[#7e877a]`} />
      <label htmlFor="join" className="w-[87px] pr-[4px] text-right">Join Status:</label>
      <Dropdown id="join" options={['Allow', 'Disallow']} className="w-[103px]" />
      {/* callout around the height options */}
      <span className="pointer-events-none absolute -top-[1px] left-[142px] z-20 h-[39px] w-[273px] border-[3px] border-[#e23c3c]" />
    </div>
  )
}

/* ---------- Project browser ---------- */

type Cell = 'plus' | 'minus' | 'tee' | 'end' | 'line' | 'plusEnd' | 'minusTop'
type TreeRow = { label: string; cells: Cell[]; icon?: ReactNode; active?: boolean }

const rows: TreeRow[] = [
  { label: 'Views (all)', cells: ['minusTop'], icon: <><path d="M4 1.500H1.500V4M12 1.500h2.500V4M4 14.500H1.500V12M12 14.500h2.500V12" /><path d="M4.500 7l2-2.500h5v5L9.500 12h-5z" fill="#eee" stroke="#666" /></> },
  { label: 'Structural Plans', cells: ['line', 'plus'] },
  { label: 'Floor Plans', cells: ['line', 'minus'] },
  { label: 'Level 1', cells: ['line', 'line', 'tee'] },
  { label: 'Level 2', cells: ['line', 'line', 'tee'], active: true },
  { label: 'Level 3', cells: ['line', 'line', 'tee'] },
  { label: 'Level 4', cells: ['line', 'line', 'tee'] },
  { label: 'Level 5', cells: ['line', 'line', 'tee'] },
  { label: 'Level 6', cells: ['line', 'line', 'tee'] },
  { label: 'Site', cells: ['line', 'line', 'end'] },
  { label: 'Ceiling Plans', cells: ['line', 'plus'] },
  { label: '3D Views', cells: ['line', 'plus'] },
  { label: 'Elevations (Building Elevation)', cells: ['line', 'plusEnd'] },
  { label: 'Legends', cells: ['tee'], icon: <><path d="M.5 1.500h15v13H.5z" fill="#eee" /><path d="M.5 3h15" strokeWidth="2.500" stroke="#777" /><path d="M3 7.500h3v2H3zM3 12h3M8 7.500h2M11 7.500h3M8 10h6M8 12.500h6" /></> },
  { label: 'Schedules/Quantities', cells: ['tee'], icon: <><path d="M.5 2.500h14v11H.5z" fill="#eee" /><path d="M.5 4h14" strokeWidth="2.500" /><path d="M.5 8h14M.5 10.500h14M5 5v8M10 5v8" stroke="#999" /></> },
  { label: 'Sheets (all)', cells: ['tee'], icon: <><path d="M.5 2.500h11l4 4v7H.5z" fill="#f3f3f3" /><path d="M11.500 2.500v4h4" /><path d="M3 5.500h5v3H3zM3 11h3v-2M8 11h3V6" stroke="#6f8aa3" /></> },
  { label: 'Families', cells: ['plus'], icon: <><path d="M1.500 1.500h6v7h-6zM10 1.500h5v13H1.500v-4H10z" fill="#dfe3e8" /></> },
  { label: 'Groups', cells: ['plus'], icon: <><path d="M4 1.500H1.500v13H4M12 1.500h2.500v13H12" /><circle cx="6.500" cy="7" r="3.500" fill="#b9c3cc" /><path d="M7 6h5v6H8z" fill="#b9c3cc" /></> },
  { label: 'Revit Links', cells: ['end'], icon: <g stroke="#c08a12" strokeWidth="1.500" fill="#ffe07a"><rect x="1" y="6" width="7" height="5" rx="2.500" /><rect x="8" y="6" width="7" height="5" rx="2.500" /><path d="M4 8.500h8" /></g> },
]

function TreeCell({ type, reach }: { type: Cell; reach: number }) {
  const box = type.startsWith('plus') || type.startsWith('minus')
  const from = type === 'minusTop' ? 10 : 0
  const to = type === 'end' || type === 'plusEnd' ? 10 : 20
  return (
    <svg width="20" height="20" viewBox="0 0 20 20" aria-hidden="true" className="shrink-0 overflow-visible fill-none">
      <path d={`M8.5 ${from}V${to}`} stroke="#8a8a8a" strokeDasharray="1 1" />
      {type !== 'line' && <path d={`M9 10.500H${reach}`} stroke="#8a8a8a" strokeDasharray="1 1" />}
      {box && <path d="M4.500 6.500h8v8h-8z" fill="#f7f7f7" stroke="#8b95a3" />}
      {box && <path d={type.startsWith('plus') ? 'M6 10.500h5M8.500 8v5' : 'M6 10.500h5'} stroke="#33497a" />}
    </svg>
  )
}

function ProjectBrowser() {
  return (
    <aside className="flex w-[207px] shrink-0 flex-col bg-[#f0f0f0]">
      <div className="flex h-[19px] items-center justify-between px-[4px] text-[11px] text-[#444]">
        <span>Project Browser - Project7</span>
        <ToolButton label="Close project browser">
          <Icon w={9} h={8}><path d="M1 0l7 8M8 0L1 8" stroke="#000" strokeWidth="1.500" /></Icon>
        </ToolButton>
      </div>
      <ul className="min-h-0 flex-1 overflow-hidden border-t-2 border-l-2 border-[#777] bg-white pt-px text-[13px]">
        {rows.map((r) => (
          <li key={r.label} className="flex h-5 items-center whitespace-nowrap">
            {r.cells.map((c, i) => (
              <TreeCell key={i} type={c} reach={r.icon ? 19 : 23} />
            ))}
            {r.icon && <Icon>{r.icon}</Icon>}
            <button
              type="button"
              className={`ml-[3px] h-5 px-[3px] ${r.active ? 'bg-[#dedede] font-bold' : ''}`}
            >
              {r.label}
            </button>
          </li>
        ))}
      </ul>
    </aside>
  )
}

/* ---------- Drawing area ---------- */

function DrawingArea() {
  return (
    <main className="flex min-w-0 flex-1 border-t-2 border-l-2 border-[#666] bg-white">
      <div className="relative min-w-0 flex-1 overflow-hidden">
        <div className="absolute top-[7px] right-[4px] flex items-center gap-[5px]">
          <ToolButton label="Minimize view" className="pt-[3px]"><Icon w={13} h={5}><path d="M.5 .5h11v4H.5z" /></Icon></ToolButton>
          <ToolButton label="Restore view"><Icon w={12} h={12}><path d="M3 3V.5h8.500V9H9M.5 3.500h8v8h-8zM3 6h3v3H3z" strokeWidth="1.200" /></Icon></ToolButton>
          <ToolButton label="Close view"><Icon w={12} h={11}><path d="M.5 .5h3L6 3.500 8.500.5h3L8 5.500l3.500 5h-3L6 7.500l-2.500 3h-3L4 5.500z" /></Icon></ToolButton>
        </div>

        <div className="absolute top-[28px] right-px flex h-[118px] w-[35px] flex-col items-center rounded-md border-2 border-[#c2c2c2] bg-[#f4f4f4]">
          <ToolButton label="Close navigation bar" className="mt-[2px] mr-[2px] self-end">
            <Icon w={8}><circle cx="4" cy="4" r="3.500" stroke="#aaa" /><path d="M2.500 2.500l3 3M5.500 2.500l-3 3" stroke="#999" /></Icon>
          </ToolButton>
          <ToolButton label="2D steering wheel" className="relative mt-[10px]">
            <Icon w={24} h={24}>
              <path d="M10 1h6q3 0 3 3v6a9 9 0 1 1-9-9z" fill="#f6f6f6" stroke="#a0a0a0" />
              <circle cx="10" cy="10" r="4.500" stroke="#a0a0a0" />
              <path d="M5 5l2 2M13 13l2 2M5 15l2-2" stroke="#b5b5b5" />
            </Icon>
            <span className="absolute right-0 bottom-[-1px] text-[10px] leading-3 font-bold text-[#7ba5d6]">2D</span>
          </ToolButton>
          <ToolButton label="Wheel options" className="mt-[5px]"><Caret className="fill-[#999]" /></ToolButton>
          <span className="mt-[5px] h-px w-[26px] bg-[#c2c2c2]" />
          <ToolButton label="Zoom region" className="mt-[8px]">
            <Icon w={16}>
              <path d="M.5 .5h10v10H.5z" fill="#b5d6a4" stroke="#8fae80" />
              <circle cx="10" cy="10" r="3.500" fill="#fff" stroke="#999" />
              <path d="M12.500 12.500L16 16" stroke="#999" strokeWidth="2" />
            </Icon>
          </ToolButton>
          <ToolButton label="Zoom options" className="mt-[9px]"><Caret className="fill-[#999]" /></ToolButton>
          <ToolButton label="Customize navigation bar" className="mt-[10px] mr-[2px] self-end">
            <Icon w={8}><circle cx="4" cy="4" r="3.500" stroke="#aaa" /><path d="M2 4h4" stroke="#999" /></Icon>
          </ToolButton>
        </div>

        <svg width="220" height="2" aria-hidden="true" className="absolute top-[308px] left-[233px]">
          <path d="M0 1h220" stroke="#000" strokeWidth="2" />
        </svg>
      </div>

      <div className="flex w-[16px] shrink-0 flex-col items-center bg-[#efefef]">
        <ToolButton label="Scroll view up" className="h-[18px]"><Icon w={7} h={4}><path d="M0 4h7L3.500 0z" fill="#333" stroke="none" /></Icon></ToolButton>
        <span className="mt-[352px] h-[15px] w-[15px] border border-[#8e8e8e] bg-linear-to-r from-[#f6f6f6] to-[#cfcfcf]" />
      </div>
    </main>
  )
}

/* ---------- Properties palette ---------- */

type Prop = { name: string; value?: string; check?: boolean; editable?: boolean; focused?: boolean }

const groups: { title: string; props: Prop[] }[] = [
  {
    title: 'Constraints',
    props: [
      { name: 'Location Line', value: 'Wall Centerline', editable: true, focused: true },
      { name: 'Base Constraint', value: 'Level 2', editable: true },
      { name: 'Base Offset', value: '0.0', editable: true },
      { name: 'Base is Attached', check: false },
      { name: 'Base Extension Distance', value: '0.0' },
      { name: 'Top Constraint', value: 'Up to level: Level 5', editable: true },
      { name: 'Unconnected Height', value: '12500.0' },
      { name: 'Top Offset', value: '0.0', editable: true },
      { name: 'Top is Attached', check: false },
      { name: 'Top Extension Distance', value: '0.0' },
      { name: 'Room Bounding', check: true },
      { name: 'Related to Mass', check: false },
    ],
  },
  {
    title: 'Structural',
    props: [
      { name: 'Structural', check: false },
      { name: 'Enable Analytical Model', check: false },
      { name: 'Structural Usage', value: 'Non-bearing' },
    ],
  },
  { title: 'Dimensions', props: [{ name: 'Area', value: '' }, { name: 'Volume', value: '' }] },
  {
    title: 'Identity Data',
    props: [
      { name: 'Image', value: '', editable: true },
      { name: 'Comments', value: '', editable: true },
      { name: 'Mark', value: '' },
    ],
  },
]

function PropertiesPalette() {
  return (
    <aside className="ml-[7px] flex w-[340px] shrink-0 flex-col bg-[#f0f0f0] pr-px">
      <div className="flex h-[19px] items-center justify-between pr-[4px] pl-[3px] text-[11px] text-[#444]">
        <span>Properties</span>
        <ToolButton label="Close properties">
          <Icon w={9} h={8}><path d="M1 0l7 8M8 0L1 8" stroke="#000" strokeWidth="1.500" /></Icon>
        </ToolButton>
      </div>
      <div className="min-h-0 flex-1 border-t-2 border-l-2 border-[#777] bg-white">
        <button
          type="button"
          className="flex h-[72px] w-full items-center border-b border-[#c8c8c8] bg-linear-to-b from-[#f8f8f8] to-[#ebebeb] pr-[3px] pl-[2px] text-left text-[13px] leading-4 text-[#444]"
        >
          <span className="flex h-[66px] w-[66px] items-center border border-[#c4c4c4] bg-white">
            <span className="h-[15px] w-full border-r border-[#555] bg-[#8c8c8c]" />
          </span>
          <span className="flex-1 pl-[4px]">Basic Wall<br />Generic - 200mm</span>
          <Icon w={7} h={4}><path d="M0 0h7L3.500 4z" fill="#333" stroke="none" /></Icon>
        </button>

        <div className="flex h-[27px] items-center bg-[#f0f0f0]">
          <span className="relative flex w-[246px] items-center">
            <select aria-label="Property filter" className="h-[24px] w-full appearance-none rounded-sm border border-[#707070] bg-linear-to-b from-[#f2f2f2] to-[#cfcfcf] px-[2px] text-[13px] text-black">
              <option>New Walls</option>
            </select>
            <svg width="7" height="4" viewBox="0 0 7 4" aria-hidden="true" className="pointer-events-none absolute right-[5px]"><path d="M0 0h7L3.500 4z" /></svg>
          </span>
          <button type="button" className="ml-[6px] flex items-center gap-[5px] text-[13px]">
            <Icon w={16}>
              <path d="M1 2l1-1h5v6H1zM9 2l1-1h5v5M1 10l1-1h5v6H1z" fill="#f3f3f3" />
              <path d="M9 6.500h6v9H9z" fill="#fff" />
              <path d="M10.500 9h3M10.500 11h3M10.500 13h3" stroke="#1d5597" />
            </Icon>
            Edit Type
          </button>
        </div>

        <table className="w-full table-fixed border-collapse text-[13px] leading-[18px]">
          <colgroup>
            <col className="w-[161px]" />
            <col />
            <col className="w-[13px]" />
          </colgroup>
          {groups.map((g) => (
            <tbody key={g.title}>
              <tr className="h-5 bg-[#dadada]">
                <th colSpan={2} scope="rowgroup" className="p-0 pl-[1px] text-left font-normal">{g.title}</th>
                <td className="p-0">
                  <ToolButton label={`Collapse ${g.title}`} className="-ml-[1px]">
                    <Icon w={7} h={8}><path d="M1 3.500l2.500-2.500L6 3.500M1 7.500L3.500 5 6 7.500" stroke="#000" strokeWidth="1.300" /></Icon>
                  </ToolButton>
                </td>
              </tr>
              {g.props.map((p) => {
                const id = `${g.title}-${p.name}`.replace(/ /g, '-')
                const tone = p.editable ? 'text-black' : 'text-[#7d7d7d]'
                return (
                  <tr key={p.name} className="h-5 border-b border-dotted border-[#777]">
                    <th scope="row" className={`border-r border-dotted border-[#777] p-0 pl-[9px] text-left font-normal ${tone}`}>
                      <label htmlFor={id} className="block h-[18px]">{p.name}</label>
                    </th>
                    <td className="p-0">
                      {p.check !== undefined ? (
                        <span className="flex h-[18px] items-center pl-[3px]"><Check id={id} checked={p.check} disabled /></span>
                      ) : (
                        <input
                          id={id}
                          type="text"
                          defaultValue={p.value}
                          disabled={!p.editable}
                          className={`block h-[18px] w-full border px-[2px] ${p.focused ? 'border-black' : 'border-transparent'} ${tone}`}
                        />
                      )}
                    </td>
                    <td className="border-x border-dotted border-[#777] p-0" />
                  </tr>
                )
              })}
            </tbody>
          ))}
        </table>
      </div>
    </aside>
  )
}

export default function App() {
  return (
    <div className="flex h-screen flex-col overflow-hidden bg-linear-to-b from-[#c3d9f2] via-[#a9c9ec] via-[24px] to-[#b7d3f3] font-['Open_Sans','Noto_Sans',sans-serif] text-black">
      <Header />
      <Ribbon />
      <OptionsBar />
      <div className="ml-[5px] flex min-h-0 flex-1 bg-[#f0f0f0]">
        <ProjectBrowser />
        <div className="w-[6px] shrink-0 bg-[#f0f0f0]" />
        <DrawingArea />
        <PropertiesPalette />
      </div>
    </div>
  )
}
